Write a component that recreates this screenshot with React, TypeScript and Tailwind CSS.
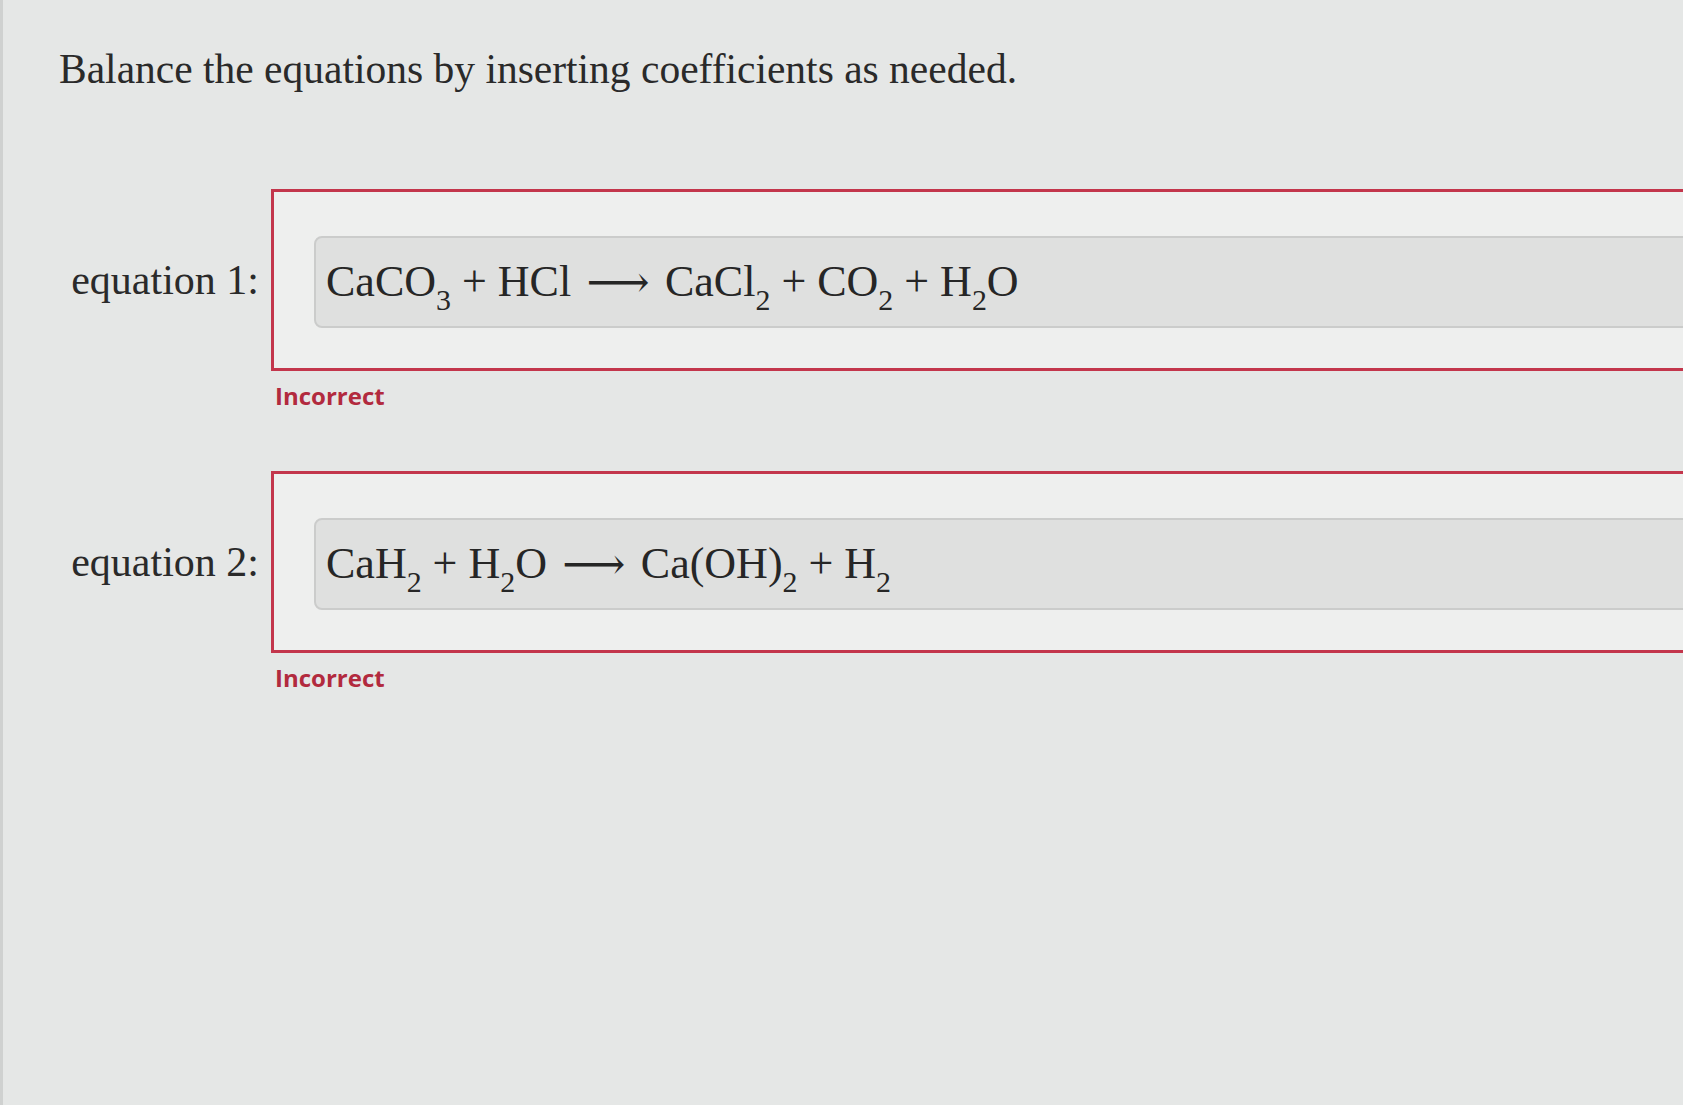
import React from "react";

const serif = { fontFamily: '"Liberation Serif", "Times New Roman", serif' };

function Sub({ children }: { children: React.ReactNode }) {
  return <sub className="relative top-[0.12em] text-[0.68em] leading-none align-sub">{children}</sub>;
}

function Arrow() {
  return <span className="mx-[0.35em] inline-block" style={{ fontFamily: '"DejaVu Serif", serif' }}>⟶</span>;
}

function EquationRow({ label, children }: { label: string; children: React.ReactNode }) {
  return (
    <div className="flex flex-col">
      <div className="flex items-center">
        <div className="w-[212px] shrink-0 pr-3 text-right text-[42px] text-[#2a2a2a]" style={serif}>
          {label}
        </div>
        <div className="h-[182px] w-[1500px] shrink-0 border-[3px] border-[#c3364c] bg-[#eeefee] pl-[40px] pt-[44px]">
          <div className="flex h-[92px] items-center rounded-lg border-2 border-[#cbcccb] bg-[#dfe0df] pl-[10px] text-[44px] text-[#262626]" style={serif}>
            {children}
          </div>
        </div>
      </div>
      <div className="ml-[216px] mt-[7px] text-[24px] font-bold text-[#b22a3e]" style={{ fontFamily: '"Open Sans", "Liberation Sans", sans-serif' }}>
        Incorrect
      </div>
    </div>
  );
}

export default function App() {
  return (
    <div className="h-[1105px] w-full overflow-hidden border-l-[3px] border-[#cfd1d0] bg-[#e5e7e6] pl-[56px] pt-[38px]">
      <h1 className="text-[41.5px] text-[#2a2a2a]" style={serif}>
        Balance the equations by inserting coefficients as needed.
      </h1>
      <div className="mt-[89px] flex flex-col gap-[57px]">
        <EquationRow label="equation 1:">
          <span>CaCO<Sub>3</Sub> + HCl</span>
          <Arrow />
          <span>CaCl<Sub>2</Sub> + CO<Sub>2</Sub> + H<Sub>2</Sub>O</span>
        </EquationRow>
        <EquationRow label="equation 2:">
          <span>CaH<Sub>2</Sub> + H<Sub>2</Sub>O</span>
          <Arrow />
          <span>Ca(OH)<Sub>2</Sub> + H<Sub>2</Sub></span>
        </EquationRow>
      </div>
    </div>
  );
}
